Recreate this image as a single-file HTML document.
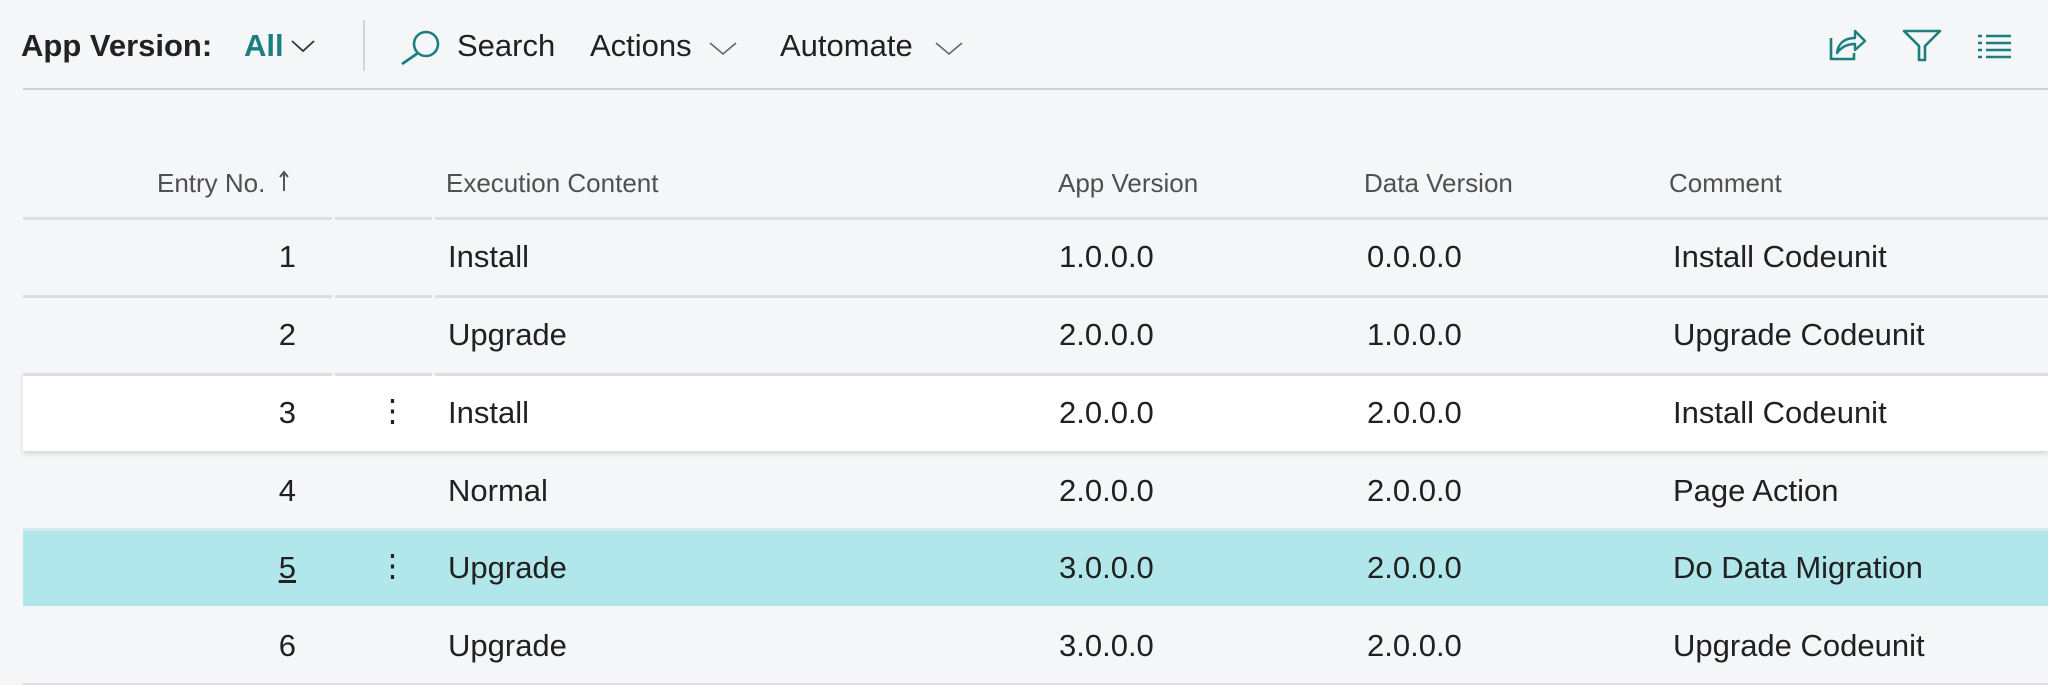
<!DOCTYPE html>
<html><head><meta charset="utf-8"><style>
*{margin:0;padding:0;box-sizing:border-box}
body{width:2048px;height:685px;background:#f5f6f8;font-family:"Liberation Sans",sans-serif;color:#212121;position:relative;overflow:hidden}
.a{position:absolute;white-space:nowrap}
.tb{font-size:31px;top:28px;line-height:36px}
.hd{font-size:26px;color:#505050;top:168px;line-height:30px}
.row{position:absolute;left:23px;right:0;height:78px;border-top:3px solid #dcdde0}
.c{position:absolute;font-size:31px;line-height:34px;top:20px;white-space:nowrap}
.num{right:calc(100% - 273px);text-align:right}
.gap{position:absolute;top:-3px;width:3px;height:3px;background:#f5f6f8}
</style></head><body>
<div class="a tb" style="left:21px;font-weight:bold;color:#222">App Version:</div>
<div class="a tb" style="left:244px;color:#1b7f80;font-weight:bold">All</div>
<svg class="a" style="left:290px;top:38px" width="26" height="16"><path d="M2 3 L13 13 L24 3" fill="none" stroke="#333" stroke-width="1.8"/></svg>
<div class="a" style="left:363px;top:20px;width:2px;height:51px;background:#d5d5d5"></div>
<svg class="a" style="left:399px;top:30px" width="42" height="36"><circle cx="27" cy="14" r="12" fill="none" stroke="#1b7f80" stroke-width="2.6"/><path d="M19 23 L3 34" stroke="#1b7f80" stroke-width="2.8"/></svg>
<div class="a tb" style="left:457px">Search</div>
<div class="a tb" style="left:590px">Actions</div>
<svg class="a" style="left:708px;top:40px" width="30" height="16"><path d="M2 3 L15 14 L28 3" fill="none" stroke="#666" stroke-width="1.6"/></svg>
<div class="a tb" style="left:780px">Automate</div>
<svg class="a" style="left:934px;top:40px" width="30" height="16"><path d="M2 3 L15 14 L28 3" fill="none" stroke="#666" stroke-width="1.6"/></svg>
<svg class="a" style="left:1828px;top:26px" width="40" height="36"><path d="M3 12 V33 H26 V27" fill="none" stroke="#1b7f80" stroke-width="2.6"/><path d="M9 27 C10 17 17 12 27 12 V5 L37 15 L27 24 V18 C20 18 14 20 9 27 Z" fill="none" stroke="#1b7f80" stroke-width="2.4" stroke-linejoin="round"/></svg>
<svg class="a" style="left:1902px;top:28px" width="40" height="34"><path d="M2 3 H38 L23 18 V32 H17 V18 Z" fill="none" stroke="#1b7f80" stroke-width="2.6" stroke-linejoin="round"/></svg>
<svg class="a" style="left:1977px;top:34px" width="36" height="26"><g stroke="#1b7f80" stroke-width="2.6"><path d="M1 2 H5 M9 2 H34 M1 9 H5 M9 9 H34 M1 16 H5 M9 16 H34 M1 23 H5 M9 23 H34"/></g></svg>
<div class="a" style="left:23px;right:0;top:88px;height:2px;background:#d0d1d3"></div>

<div class="a hd" style="left:157px">Entry No.</div>
<svg class="a" style="left:278px;top:170px" width="12" height="22"><path d="M6 2 V21 M2 7 L6 2 L10 7" fill="none" stroke="#555" stroke-width="2"/></svg>
<div class="a hd" style="left:446px">Execution Content</div>
<div class="a hd" style="left:1058px">App Version</div>
<div class="a hd" style="left:1364px">Data Version</div>
<div class="a hd" style="left:1669px">Comment</div>

<div class="row" style="top:217px"><div class="gap" style="left:309px"></div><div class="gap" style="left:409px"></div>
<div class="c num">1</div><div class="c" style="left:425px">Install</div><div class="c" style="left:1036px">1.0.0.0</div><div class="c" style="left:1344px">0.0.0.0</div><div class="c" style="left:1650px">Install Codeunit</div></div>
<div class="row" style="top:295px"><div class="gap" style="left:309px"></div><div class="gap" style="left:409px"></div>
<div class="c num">2</div><div class="c" style="left:425px">Upgrade</div><div class="c" style="left:1036px">2.0.0.0</div><div class="c" style="left:1344px">1.0.0.0</div><div class="c" style="left:1650px">Upgrade Codeunit</div></div>
<div class="row" style="top:373px;background:#fff;box-shadow:0 3px 5px rgba(0,0,0,0.12);z-index:2"><div class="gap" style="left:309px"></div><div class="gap" style="left:409px"></div>
<div class="c num">3</div><div class="c" style="left:354px;top:18px">&#8942;</div><div class="c" style="left:425px">Install</div><div class="c" style="left:1036px">2.0.0.0</div><div class="c" style="left:1344px">2.0.0.0</div><div class="c" style="left:1650px">Install Codeunit</div></div>
<div class="row" style="top:451px;border-top-color:transparent"><div class="c num">4</div><div class="c" style="left:425px">Normal</div><div class="c" style="left:1036px">2.0.0.0</div><div class="c" style="left:1344px">2.0.0.0</div><div class="c" style="left:1650px">Page Action</div></div>
<div class="row" style="top:528px;background:#b1e7ea;border-top-color:#d6e9eb"><div class="c num" style="text-decoration:underline">5</div><div class="c" style="left:354px;top:18px">&#8942;</div><div class="c" style="left:425px">Upgrade</div><div class="c" style="left:1036px">3.0.0.0</div><div class="c" style="left:1344px">2.0.0.0</div><div class="c" style="left:1650px">Do Data Migration</div></div>
<div class="row" style="top:606px;border-top-color:transparent"><div class="c num">6</div><div class="c" style="left:425px">Upgrade</div><div class="c" style="left:1036px">3.0.0.0</div><div class="c" style="left:1344px">2.0.0.0</div><div class="c" style="left:1650px">Upgrade Codeunit</div></div>
<div class="a" style="left:23px;right:0;top:683px;height:2px;background:#dcdde0"></div>
</body></html>
